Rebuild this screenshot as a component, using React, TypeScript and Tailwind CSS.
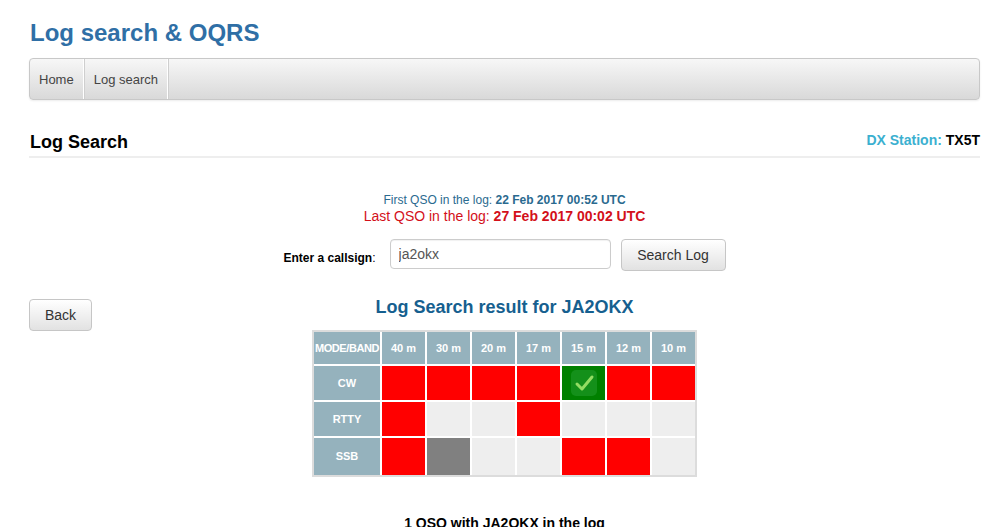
import React from 'react';

type Cell = 'red' | 'none' | 'gray' | 'ok';

const bands = ['40 m', '30 m', '20 m', '17 m', '15 m', '12 m', '10 m'];

const rows: { mode: string; cells: Cell[]; h: string }[] = [
  { mode: 'CW', cells: ['red', 'red', 'red', 'red', 'ok', 'red', 'red'], h: 'h-[34px]' },
  { mode: 'RTTY', cells: ['red', 'none', 'none', 'red', 'none', 'none', 'none'], h: 'h-[34px]' },
  { mode: 'SSB', cells: ['red', 'gray', 'none', 'none', 'red', 'red', 'none'], h: 'h-[37px]' },
];

const cellColor: Record<Cell, string> = {
  red: 'bg-[#ff0000]',
  none: 'bg-[#eeeeee]',
  gray: 'bg-[#808080]',
  ok: 'bg-[#008000]',
};

function CheckMark() {
  return (
    <div className="w-[26px] h-[26px] rounded-[5px] bg-[#14901a] flex items-center justify-center">
      <svg width="22" height="20" viewBox="0 0 22 20">
        <path d="M4 11 L9 16 L19 4" fill="none" stroke="#93dd63" strokeWidth="3" strokeLinecap="round" strokeLinejoin="round" />
      </svg>
    </div>
  );
}

function ResultGrid() {
  return (
    <div className="border-2 border-[#dcdcdc] inline-block">
      <div className="grid grid-cols-[66px_repeat(7,43px)] gap-[2px] bg-white">
        <div className="h-[32px] bg-[#95b2bd] text-white font-bold text-[11px] tracking-[-0.4px] flex items-center justify-center">MODE/BAND</div>
        {bands.map((b) => (
          <div key={b} className="h-[32px] bg-[#95b2bd] text-white font-bold text-[11px] flex items-center justify-center">
            {b}
          </div>
        ))}
        {rows.map((r) => (
          <React.Fragment key={r.mode}>
            <div className={`${r.h} bg-[#95b2bd] text-white font-bold text-[11px] flex items-center justify-center`}>
              {r.mode}
            </div>
            {r.cells.map((c, i) => (
              <div key={i} className={`${r.h} ${cellColor[c]} flex items-center justify-center`}>
                {c === 'ok' && <CheckMark />}
              </div>
            ))}
          </React.Fragment>
        ))}
      </div>
    </div>
  );
}

export default function App() {
  return (
    <div className="min-h-screen bg-white font-['Liberation_Sans',Arial,sans-serif] text-[#333]">
      <div className="w-[951px] ml-[29px]">
        <h1 className="pt-[19px] pl-[1px] text-[24px] leading-[28px] font-bold text-[#2f6fa6]">Log search &amp; OQRS</h1>

        <nav className="mt-[11px] h-[42px] rounded-[4px] border border-[#c8c8c8] bg-gradient-to-b from-[#f7f7f7] to-[#d9d9d9] flex items-stretch shadow-[0_1px_2px_rgba(0,0,0,0.08)]">
          <a className="px-[9px] pt-[2px] flex items-center text-[13px] text-[#444] border-r border-r-white shadow-[1px_0_0_#cfcfcf]">Home</a>
          <a className="px-[9px] pt-[2px] ml-[1px] flex items-center text-[13px] text-[#444] border-r border-r-white shadow-[1px_0_0_#cfcfcf]">Log search</a>
        </nav>

        <div className="mt-[30px] flex items-end justify-between border-b-2 border-[#eeeeee] pb-[3px] pl-[1px]">
          <h2 className="text-[18px] leading-[22px] font-bold text-black">Log Search</h2>
          <div className="text-[14px] font-bold mb-[2px]">
            <span className="text-[#3bb0d0]">DX Station: </span>
            <span className="text-black">TX5T</span>
          </div>
        </div>

        <div className="mt-[35px] text-center">
          <div className="text-[12px] leading-[15px] text-[#2a6a8f]">
            First QSO in the log: <b>22 Feb 2017 00:52 UTC</b>
          </div>
          <div className="text-[14px] leading-[17px] text-[#d3101a]">
            Last QSO in the log: <b>27 Feb 2017 00:02 UTC</b>
          </div>
        </div>

        <div className="mt-[12px] flex items-center justify-center gap-[10px]">
          <label className="text-[12px] text-black mt-[8px] mr-[4px]">
            <b>Enter a callsign</b>:
          </label>
          <input
            defaultValue="ja2okx"
            className="w-[221px] h-[30px] border border-[#cccccc] rounded-[4px] px-[8px] text-[14px] text-[#555] outline-none shadow-[inset_0_1px_1px_rgba(0,0,0,0.06)]"
          />
          <button className="w-[105px] h-[32px] mt-[2px] border border-[#c6c6c6] rounded-[4px] bg-gradient-to-b from-white to-[#e2e2e2] text-[14px] text-[#333]">
            Search Log
          </button>
        </div>

        <div className="mt-[28px] grid grid-cols-[1fr_auto_1fr]">
          <div>
            <button className="w-[63px] h-[32px] border border-[#c6c6c6] rounded-[4px] bg-gradient-to-b from-white to-[#e2e2e2] text-[14px] text-[#333]">
              Back
            </button>
          </div>
          <div className="flex flex-col items-center">
            <div className="text-[18px] leading-[20px] font-bold text-[#165f8f] mt-[-2px]">Log Search result for JA2OKX</div>
            <div className="mt-[13px]">
              <ResultGrid />
            </div>
            <div className="mt-[36px] text-[14px] font-bold text-black">1 QSO with JA2OKX in the log</div>
          </div>
          <div />
        </div>
      </div>
    </div>
  );
}
